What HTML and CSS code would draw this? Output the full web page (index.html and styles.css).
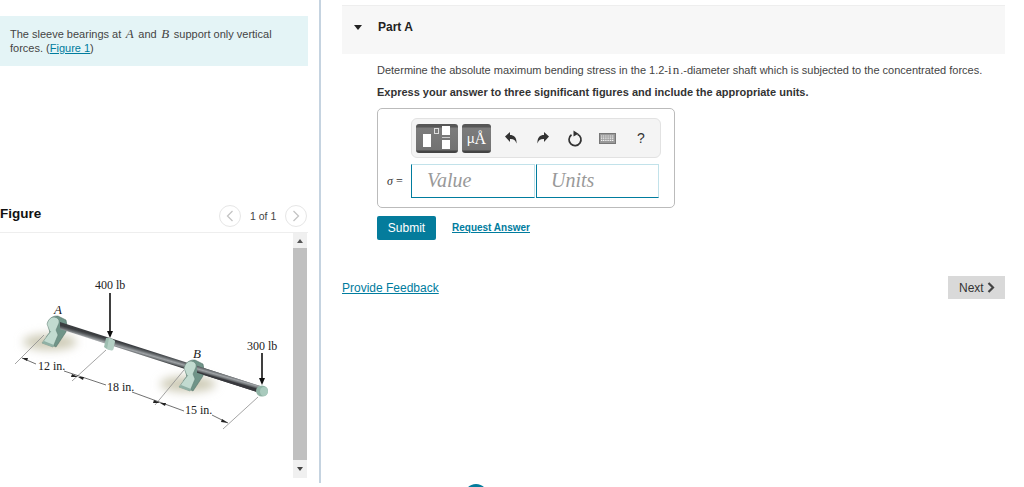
FILE: index.html
```html
<!DOCTYPE html>
<html lang="en">
<head>
  <meta charset="UTF-8">
  <meta name="viewport" content="width=device-width, initial-scale=1.0">
  <title>Part A</title>
  <link rel="stylesheet" href="styles.css">
</head>
<body>
  <div class="page">
    <div class="left">
      <div class="intro">The sleeve bearings at <i class="math">A</i> and <i class="math">B</i> support only vertical forces. (<a href="#">Figure 1</a>)</div>

      <div class="figure-head">
        <h2>Figure</h2>
        <div class="pager">
          <span class="circle"><svg width="8" height="12" viewBox="0 0 8 12"><path d="M6.5 1 1.5 6l5 5" fill="none" stroke="#c4c4c4" stroke-width="1.3"/></svg></span>
          <span class="count">1 of 1</span>
          <span class="circle"><svg width="8" height="12" viewBox="0 0 8 12"><path d="M1.5 1l5 5-5 5" fill="none" stroke="#c4c4c4" stroke-width="1.3"/></svg></span>
        </div>
      </div>

      <div class="figure-body">
        <svg class="drawing" width="293" height="245" viewBox="0 233 293 245">
          <defs>
            <linearGradient id="shaft" gradientUnits="userSpaceOnUse" x1="161" y1="354" x2="159" y2="361">
              <stop offset="0" stop-color="#3a3d40"/>
              <stop offset="0.25" stop-color="#5b5f62"/>
              <stop offset="0.6" stop-color="#a0a4a7"/>
              <stop offset="0.85" stop-color="#686c6f"/>
              <stop offset="1" stop-color="#37393c"/>
            </linearGradient>
            <filter id="soft" x="-50%" y="-100%" width="200%" height="300%"><feGaussianBlur stdDeviation="5"/></filter>
            <filter id="tiny"><feGaussianBlur stdDeviation="0.3"/></filter>
            <g id="bearing">
              <path d="M48 322Q52 315 58 316L66 320Q68 326 66 332L56 347 52 345Z" fill="#6f9488" stroke="#4f6a60" stroke-width="0.5"/>
              <path d="M42 343 50 332 47 324Q49 317 54 317 60 318 59 323L56 330 58 335 53 347Z" fill="#c2dbd0" stroke="#5f7d72" stroke-width="0.5"/>
              <path d="M42 343 53 347 54 345 44 341Z" fill="#8fb0a4"/>
              <path d="M51 331 46 337" stroke="#7d9c90" stroke-width="0.7"/>
            </g>
          </defs>

          <ellipse cx="50" cy="342" rx="27" ry="8" fill="#cfccb8" filter="url(#soft)"/>
          <ellipse cx="188" cy="384" rx="28" ry="8" fill="#cfccb8" filter="url(#soft)"/>

          <g filter="url(#tiny)">
            <!-- extension lines -->
            <g stroke="#8d8d8d" stroke-width="0.8" fill="none">
              <path d="M44 335 15 364"/>
              <path d="M106 350 72 381"/>
              <path d="M184 370 155 405"/>
              <path d="M258 397 223 429"/>
            </g>
            <!-- dimension lines -->
            <g stroke="#333" stroke-width="0.7" fill="none">
              <path d="M22 358 36 364"/>
              <path d="M64 371 106 385"/>
              <path d="M132 392 184 411"/>
              <path d="M212 415 228 423"/>
            </g>

            <use href="#bearing"/>
            <!-- shaft -->
            <path d="M60 322.100 262 386.500V393.500L60 329.100Z" fill="url(#shaft)"/>

            <use href="#bearing" transform="translate(137 44)"/>
            <path d="M197 365.800 262 386.500V393.500L197 372.800Z" fill="url(#shaft)"/>

            <!-- collar -->
            <path d="M106 338Q110 337 115 341L113 350Q108 351 104 347Z" fill="#9dbdb0"/>
            <path d="M109 338Q112 338 115 341L113 350Q110 351 107 349Z" fill="#b4d0c4"/>

            <!-- end cap -->
            <ellipse cx="262" cy="391" rx="6" ry="5.5" fill="#8fb3a5"/>
            <ellipse cx="264" cy="391.500" rx="4" ry="4.500" fill="#a9cabd"/>

            <!-- force arrows -->
            <path d="M110 293V331" stroke="#111" stroke-width="1.6"/>
            <path d="M107 331h6l-3 7z" fill="#111"/>
            <path d="M262 353V379" stroke="#111" stroke-width="1.6"/>
            <path d="M259 378h6l-3 7z" fill="#111"/>

            <!-- dimension arrow heads -->
            <g fill="#222">
              <path d="M22 358 28 358 27 361Z"/>
              <path d="M78 377 72 374 71 377Z"/>
              <path d="M78 377 84 377 83 380Z"/>
              <path d="M160 403 154 400 153 403Z"/>
              <path d="M160 403 166 403 165 406Z"/>
              <path d="M228 423 222 419 221 422Z"/>
            </g>
          </g>

          <g class="label">
            <text x="95" y="289">400 lb</text>
            <text x="247" y="350">300 lb</text>
            <text x="38" y="370">12 in.</text>
            <text x="107" y="391">18 in.</text>
            <text x="185" y="414">15 in.</text>
            <text class="italic" x="54" y="314">A</text>
            <text class="italic" x="193" y="358">B</text>
          </g>
        </svg>

        <div class="scrollbar">
          <span class="scroll-btn"><i class="up"></i></span>
          <span class="thumb"></span>
          <span class="scroll-btn low"><i class="down"></i></span>
        </div>
      </div>
    </div>

    <div class="right">
      <div class="part-head">
        <i class="caret"></i>
        <h3>Part A</h3>
      </div>

      <div class="part-body">
        <p class="question">Determine the absolute maximum bending stress in the 1.2-<span class="math-up">in</span>.-diameter shaft which is subjected to the concentrated forces.</p>
        <p class="instruct">Express your answer to three significant figures and include the appropriate units.</p>

        <div class="answer">
          <div class="toolbar">
            <span class="tool wide">
              <svg width="30" height="24" viewBox="0 0 30 24">
                <rect x="1" y="8" width="8" height="13" fill="#fff"/>
                <rect x="12.500" y="2.500" width="4" height="5" fill="none" stroke="#ddd"/>
                <rect x="20" y="0" width="8" height="9" fill="#fff"/>
                <rect x="20" y="11" width="8" height="1" fill="#ccc"/>
                <rect x="20" y="14" width="8" height="9" fill="#fff"/>
              </svg>
            </span>
            <span class="tool narrow"><span class="mu">µ</span><span class="ang">Å</span></span>
            <span class="plain first">
              <svg width="14" height="14" viewBox="0 0 14 14"><path d="M1 5.500 6 1v3c4 0 7 2.500 6.500 8.500C11.500 9 9.500 7.800 6 8v3Z" fill="#333"/></svg>
            </span>
            <span class="plain">
              <svg width="14" height="14" viewBox="0 0 14 14"><path d="M13 5.500 8 1v3C4 4 1 6.500 1.500 12.500 2.500 9 4.500 7.800 8 8v3Z" fill="#333"/></svg>
            </span>
            <span class="plain">
              <svg width="16" height="17" viewBox="0 0 16 17"><path d="M4.500 4.800a6 6 0 1 0 6-.6" fill="none" stroke="#333" stroke-width="1.700"/><path d="M6.500 .5 11.500 3.800 6.500 6.500Z" fill="#333"/></svg>
            </span>
            <span class="plain">
              <svg width="17" height="11" viewBox="0 0 17 11">
                <rect x=".5" y=".5" width="16" height="10" fill="#999" stroke="#777"/>
                <path d="M2 3h13M2 5.200h13M2 7.400h13" stroke="#f2f2f2" stroke-width="1.200" stroke-dasharray="1.200 .6"/>
              </svg>
            </span>
            <span class="plain help">?</span>
          </div>

          <div class="entry">
            <span class="sigma"><i>σ</i> =</span>
            <div class="field value">Value</div>
            <div class="field units">Units</div>
          </div>
        </div>

        <div class="actions">
          <button class="submit">Submit</button>
          <a class="request" href="#">Request Answer</a>
        </div>
      </div>

      <div class="foot">
        <a class="feedback" href="#">Provide Feedback</a>
        <button class="next">Next
          <svg width="8" height="11" viewBox="0 0 8 11"><path d="M1.500 1 6 5.500 1.500 10" fill="none" stroke="#444" stroke-width="2.200"/></svg>
        </button>
      </div>
    </div>
  </div>
  <span class="peek"></span>
</body>
</html>
```

FILE: styles.css
```css
/* page */
html, body {
  margin: 0;
  padding: 0;
  height: 487px;
  overflow: hidden;
  background: #fff;
}

body {
  font-family: "Liberation Sans", Arial, sans-serif;
  color: #333;
}

a {
  color: #007c9e;
}

.page {
  display: flex;
  align-items: flex-start;
}

/* left column */
.left {
  width: 308px;
  padding-top: 16px;
  margin-right: 11px;
}

.intro {
  height: 50px;
  box-sizing: border-box;
  padding: 11px 30px 0 10px;
  background: #e4f4f6;
  font-size: 11px;
  line-height: 14px;
  color: #444;
}

.math {
  margin: 0 1.5px;
  font-family: "Liberation Serif", serif;
  font-size: 13px;
  line-height: 12px;
}

.figure-head {
  display: flex;
  align-items: center;
  justify-content: space-between;
  height: 33px;
  margin-top: 133px;
  border-bottom: 1px solid #eee;
}

.figure-head h2 {
  margin: 0 0 4px;
  font-size: 13.5px;
  line-height: 16px;
  color: #111;
}

.pager {
  display: flex;
  align-items: center;
  gap: 9px;
  margin: 1px 1px 0 0;
}

.circle {
  display: flex;
  align-items: center;
  justify-content: center;
  width: 20px;
  height: 20px;
  border: 1px solid #e6e6e6;
  border-radius: 50%;
}

.count {
  width: 26px;
  font-size: 10.5px;
  white-space: nowrap;
  color: #444;
}

.figure-body {
  display: flex;
  height: 245px;
}

.drawing {
  display: block;
  flex: none;
}

.label text {
  font-family: "Liberation Serif", serif;
  font-size: 12px;
  fill: #222;
}

.label .italic {
  font-size: 13px;
  font-style: italic;
}

.scrollbar {
  display: flex;
  flex-direction: column;
  width: 14px;
  height: 245px;
  background: #f0f0f0;
}

.scroll-btn {
  display: flex;
  align-items: center;
  justify-content: center;
  height: 15px;
  flex: none;
}

.scroll-btn.low {
  height: 18px;
}

.thumb {
  flex: 1;
  background: #c0c0c0;
}

.up {
  border: 3px solid transparent;
  border-top: 0;
  border-bottom: 4px solid #555;
}

.down {
  border: 3px solid transparent;
  border-bottom: 0;
  border-top: 4px solid #444;
}

/* right column */
.right {
  width: 705px;
  height: 483px;
  padding: 5px 19px 0 21px;
  box-sizing: border-box;
  border-left: 2px solid #c5d3e0;
}

.part-head {
  display: flex;
  align-items: center;
  height: 49px;
  box-sizing: border-box;
  padding: 0 0 6px 12px;
  background: #f7f7f7;
  border-top: 1px solid #eee;
}

.caret {
  border: 4.5px solid transparent;
  border-bottom: 0;
  border-top: 5px solid #222;
}

.part-head h3 {
  margin: 0 0 0 16px;
  font-size: 12px;
  line-height: 14px;
  color: #222;
}

.part-body {
  padding: 0 0 0 35px;
}

.question,
.instruct {
  margin: 0;
  font-size: 11px;
  line-height: 14px;
  white-space: nowrap;
  color: #444;
}

.question {
  padding-top: 9px;
}

.instruct {
  padding-top: 8px;
  font-weight: bold;
  color: #333;
}

.math-up {
  font-family: "Liberation Serif", serif;
  font-size: 13px;
  line-height: 12px;
  letter-spacing: 1px;
}

/* answer box */
.answer {
  width: 298px;
  height: 100px;
  box-sizing: border-box;
  margin-top: 9px;
  padding: 9px 13px 0 33px;
  border: 1px solid #bbb;
  border-radius: 5px;
}

.toolbar {
  display: flex;
  align-items: center;
  height: 40px;
  box-sizing: border-box;
  padding: 0 0 0 4px;
  background: #f4f4f4;
  border: 1px solid #e2e2e2;
  border-radius: 6px;
}

.tool {
  display: flex;
  align-items: center;
  justify-content: center;
  flex: none;
  height: 29px;
  border-radius: 3px;
  background: linear-gradient(to bottom, #565656 0, #565656 3px, #7c7c7c 4px, #727272 26px, #444 27px);
  color: #fff;
}

.tool.wide {
  width: 42px;
  margin-right: 4px;
}

.tool.narrow {
  width: 29px;
  padding-top: 1px;
  box-sizing: border-box;
}

.mu {
  font-size: 13px;
}

.ang {
  font-family: "Liberation Serif", serif;
  font-size: 16px;
}

.plain {
  display: flex;
  align-items: center;
  justify-content: center;
  flex: none;
  width: 32px;
  height: 29px;
}

.plain.first {
  margin-left: 4px;
}

.plain.help {
  margin-left: 2px;
  font-size: 14px;
  color: #333;
}

.entry {
  display: flex;
  align-items: stretch;
  height: 34px;
  margin: 6px -1px 0 -33px;
}

.sigma {
  width: 33px;
  box-sizing: border-box;
  padding-left: 9px;
  font-family: "Liberation Serif", serif;
  font-size: 12px;
  line-height: 34px;
  color: #333;
  white-space: nowrap;
}

.field {
  box-sizing: border-box;
  border: 1px solid #c2e2ea;
  border-left-color: #007c9e;
  border-bottom-color: #007c9e;
  font-family: "Liberation Serif", serif;
  font-style: italic;
  font-size: 20px;
  line-height: 31px;
  color: #999;
}

.value {
  width: 124px;
  padding-left: 15px;
  margin-right: 1px;
}

.units {
  width: 123px;
  padding-left: 14px;
}

.actions {
  display: flex;
  align-items: center;
  gap: 16px;
  margin-top: 8px;
}

.submit {
  width: 59px;
  height: 24px;
  padding: 0;
  border: none;
  border-radius: 2px;
  background: #047c9c;
  color: #fff;
  font-family: inherit;
  font-size: 12px;
}

.request {
  margin-bottom: 1px;
  font-size: 10px;
  font-weight: bold;
}

/* bottom row */
.foot {
  display: flex;
  align-items: center;
  justify-content: space-between;
  height: 23px;
  margin-top: 36px;
}

.feedback {
  font-size: 12px;
}

.next {
  display: flex;
  align-items: center;
  gap: 3px;
  height: 23px;
  width: 57px;
  padding: 0 0 0 11px;
  border: none;
  background: #d9d9d9;
  color: #333;
  font-family: inherit;
  font-size: 12px;
}

/* edge of a round button cut off by the window */
.peek {
  position: absolute;
  left: 464px;
  top: 484px;
  width: 24px;
  height: 24px;
  border-radius: 50%;
  background: #047c9c;
}
```
